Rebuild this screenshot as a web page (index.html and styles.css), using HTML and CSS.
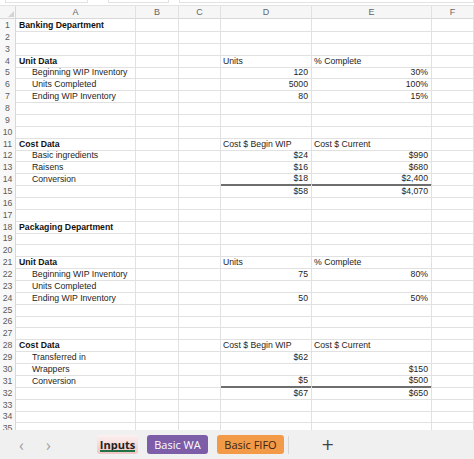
FILE: index.html
```html
<!DOCTYPE html>
<html>
<head>
<meta charset="utf-8">
<link rel="stylesheet" href="styles.css">
</head>
<body>
<div class="app">
  <div class="topstrip">
    <div class="box b1"></div><div class="box b2"></div><div class="box b3"></div>
  </div>
  <div class="sheet">
    <div class="row head"><span class="rh corner"><span class="tri"></span></span><span class="c ch">A</span><span class="c ch">B</span><span class="c ch">C</span><span class="c ch">D</span><span class="c ch">E</span><span class="c ch">F</span></div>
    <div class="row"><span class="rh">1</span><span class="c b">Banking Department</span><span class="c"></span><span class="c"></span><span class="c"></span><span class="c"></span><span class="c"></span></div>
    <div class="row"><span class="rh">2</span><span class="c"></span><span class="c"></span><span class="c"></span><span class="c"></span><span class="c"></span><span class="c"></span></div>
    <div class="row"><span class="rh">3</span><span class="c"></span><span class="c"></span><span class="c"></span><span class="c"></span><span class="c"></span><span class="c"></span></div>
    <div class="row"><span class="rh">4</span><span class="c b">Unit Data</span><span class="c"></span><span class="c"></span><span class="c">Units</span><span class="c">% Complete</span><span class="c"></span></div>
    <div class="row"><span class="rh">5</span><span class="c in">Beginning WIP Inventory</span><span class="c"></span><span class="c"></span><span class="c r">120</span><span class="c r">30%</span><span class="c"></span></div>
    <div class="row"><span class="rh">6</span><span class="c in">Units Completed</span><span class="c"></span><span class="c"></span><span class="c r">5000</span><span class="c r">100%</span><span class="c"></span></div>
    <div class="row"><span class="rh">7</span><span class="c in">Ending WIP Inventory</span><span class="c"></span><span class="c"></span><span class="c r">80</span><span class="c r">15%</span><span class="c"></span></div>
    <div class="row"><span class="rh">8</span><span class="c"></span><span class="c"></span><span class="c"></span><span class="c"></span><span class="c"></span><span class="c"></span></div>
    <div class="row"><span class="rh">9</span><span class="c"></span><span class="c"></span><span class="c"></span><span class="c"></span><span class="c"></span><span class="c"></span></div>
    <div class="row"><span class="rh">10</span><span class="c"></span><span class="c"></span><span class="c"></span><span class="c"></span><span class="c"></span><span class="c"></span></div>
    <div class="row"><span class="rh">11</span><span class="c b">Cost Data</span><span class="c"></span><span class="c"></span><span class="c">Cost $ Begin WIP</span><span class="c">Cost $ Current</span><span class="c"></span></div>
    <div class="row"><span class="rh">12</span><span class="c in">Basic ingredients</span><span class="c"></span><span class="c"></span><span class="c r">$24</span><span class="c r">$990</span><span class="c"></span></div>
    <div class="row"><span class="rh">13</span><span class="c in">Raisens</span><span class="c"></span><span class="c"></span><span class="c r">$16</span><span class="c r">$680</span><span class="c"></span></div>
    <div class="row"><span class="rh">14</span><span class="c in">Conversion</span><span class="c"></span><span class="c"></span><span class="c r dbl">$18</span><span class="c r dbl">$2,400</span><span class="c"></span></div>
    <div class="row"><span class="rh">15</span><span class="c"></span><span class="c"></span><span class="c"></span><span class="c r">$58</span><span class="c r">$4,070</span><span class="c"></span></div>
    <div class="row"><span class="rh">16</span><span class="c"></span><span class="c"></span><span class="c"></span><span class="c"></span><span class="c"></span><span class="c"></span></div>
    <div class="row"><span class="rh">17</span><span class="c"></span><span class="c"></span><span class="c"></span><span class="c"></span><span class="c"></span><span class="c"></span></div>
    <div class="row"><span class="rh">18</span><span class="c b">Packaging Department</span><span class="c"></span><span class="c"></span><span class="c"></span><span class="c"></span><span class="c"></span></div>
    <div class="row"><span class="rh">19</span><span class="c"></span><span class="c"></span><span class="c"></span><span class="c"></span><span class="c"></span><span class="c"></span></div>
    <div class="row"><span class="rh">20</span><span class="c"></span><span class="c"></span><span class="c"></span><span class="c"></span><span class="c"></span><span class="c"></span></div>
    <div class="row"><span class="rh">21</span><span class="c b">Unit Data</span><span class="c"></span><span class="c"></span><span class="c">Units</span><span class="c">% Complete</span><span class="c"></span></div>
    <div class="row"><span class="rh">22</span><span class="c in">Beginning WIP Inventory</span><span class="c"></span><span class="c"></span><span class="c r">75</span><span class="c r">80%</span><span class="c"></span></div>
    <div class="row"><span class="rh">23</span><span class="c in">Units Completed</span><span class="c"></span><span class="c"></span><span class="c"></span><span class="c"></span><span class="c"></span></div>
    <div class="row"><span class="rh">24</span><span class="c in">Ending WIP Inventory</span><span class="c"></span><span class="c"></span><span class="c r">50</span><span class="c r">50%</span><span class="c"></span></div>
    <div class="row"><span class="rh">25</span><span class="c"></span><span class="c"></span><span class="c"></span><span class="c"></span><span class="c"></span><span class="c"></span></div>
    <div class="row"><span class="rh">26</span><span class="c"></span><span class="c"></span><span class="c"></span><span class="c"></span><span class="c"></span><span class="c"></span></div>
    <div class="row"><span class="rh">27</span><span class="c"></span><span class="c"></span><span class="c"></span><span class="c"></span><span class="c"></span><span class="c"></span></div>
    <div class="row"><span class="rh">28</span><span class="c b">Cost Data</span><span class="c"></span><span class="c"></span><span class="c">Cost $ Begin WIP</span><span class="c">Cost $ Current</span><span class="c"></span></div>
    <div class="row"><span class="rh">29</span><span class="c in">Transferred in</span><span class="c"></span><span class="c"></span><span class="c r">$62</span><span class="c"></span><span class="c"></span></div>
    <div class="row"><span class="rh">30</span><span class="c in">Wrappers</span><span class="c"></span><span class="c"></span><span class="c"></span><span class="c r">$150</span><span class="c"></span></div>
    <div class="row"><span class="rh">31</span><span class="c in">Conversion</span><span class="c"></span><span class="c"></span><span class="c r dbl">$5</span><span class="c r dbl">$500</span><span class="c"></span></div>
    <div class="row"><span class="rh">32</span><span class="c"></span><span class="c"></span><span class="c"></span><span class="c r">$67</span><span class="c r">$650</span><span class="c"></span></div>
    <div class="row"><span class="rh">33</span><span class="c"></span><span class="c"></span><span class="c"></span><span class="c"></span><span class="c"></span><span class="c"></span></div>
    <div class="row"><span class="rh">34</span><span class="c"></span><span class="c"></span><span class="c"></span><span class="c"></span><span class="c"></span><span class="c"></span></div>
    <div class="row"><span class="rh">35</span><span class="c"></span><span class="c"></span><span class="c"></span><span class="c"></span><span class="c"></span><span class="c"></span></div>
  </div>
  <div class="tabbar">
    <div class="nav"><span class="arrow">&lsaquo;</span><span class="arrow">&rsaquo;</span></div>
    <div class="tabs">
      <span class="tab t-inputs">Inputs</span>
      <span class="tab t-wa">Basic WA</span>
      <span class="tab t-fifo">Basic FIFO</span>
      <span class="sep"></span>
      <span class="plus">+</span>
    </div>
  </div>
</div>
</body>
</html>
```
FILE: styles.css
```css
html, body {
  margin: 0;
  padding: 0;
  background: #ffffff;
}
.app {
  width: 474px;
  height: 459px;
  overflow: hidden;
  display: flex;
  flex-direction: column;
  font-family: "Liberation Sans", Arial, sans-serif;
  font-size: 8.7px;
  color: #1e1e1e;
}
.topstrip {
  height: 6px;
  flex: none;
  display: flex;
  background: #ffffff;
  border-bottom: 1px solid #e3e3e3;
  box-sizing: border-box;
}
.box {
  height: 3px;
  border: 1px solid #e2e2e2;
  border-top: none;
  box-sizing: border-box;
}
.b1 { width: 84px; margin-left: 5px; }
.b2 { width: 62px; margin-left: 20px; }
.b3 { width: 300px; margin-left: 10px; }
.sheet {
  flex: 1;
  overflow: hidden;
}
.row {
  display: grid;
  grid-template-columns: 16px 120px 43px 42px 91px 120px 42px;
  height: 11.87px;
}
.row.head {
  height: 13px;
  background: #f6f6f6;
}
.c, .rh {
  box-sizing: border-box;
  border-right: 1px solid #e1e1e1;
  border-bottom: 1px solid #e1e1e1;
  white-space: nowrap;
  overflow: visible;
  line-height: 12px;
  padding: 0 2px;
}
.row.head .c, .row.head .rh {
  line-height: 12px;
  border-bottom: 1px solid #d8d8d8;
}
.ch {
  text-align: center;
  color: #666666;
  font-size: 9px;
}
.rh {
  text-align: center;
  color: #5c5c5c;
  padding: 0;
  background: #f8f8f8;
  border-right: 1px solid #d8d8d8;
}
.corner {
  position: relative;
  background: #f6f6f6;
}
.tri {
  position: absolute;
  right: 1px;
  bottom: 1px;
  width: 0;
  height: 0;
  border-left: 6px solid transparent;
  border-bottom: 6px solid #d4d4d4;
}
.b {
  font-weight: bold;
  padding-left: 3px;
  color: #111111;
}
.in {
  padding-left: 16px;
}
.r {
  text-align: right;
  padding-right: 3px;
}
.dbl {
  border-bottom: 2px solid #6e6e6e;
  line-height: 11px;
}
.tabbar {
  height: 29px;
  flex: none;
  background: #f0f0f0;
  display: flex;
  align-items: center;
  font-family: "Open Sans", "Noto Sans", sans-serif;
}
.nav {
  width: 97px;
  display: flex;
  padding-left: 19px;
  box-sizing: border-box;
  gap: 19px;
}
.arrow {
  color: #a0a0a0;
  font-size: 16px;
  line-height: 16px;
  width: 8px;
}
.tabs {
  display: flex;
  align-items: center;
}
.tab {
  height: 19px;
  line-height: 19px;
  font-size: 11px;
  border-radius: 3px;
  box-sizing: border-box;
  margin-right: 9px;
}
.t-inputs {
  width: 41px;
  text-align: center;
  font-weight: bold;
  color: #222222;
  background: linear-gradient(#fcf1f1, #f0c4c4);
  position: relative;
}
.t-inputs::after {
  content: "";
  position: absolute;
  left: 3px;
  right: 3px;
  bottom: 2px;
  height: 2px;
  background: #217346;
}
.t-wa {
  width: 61px;
  text-align: center;
  color: #ffffff;
  background: #7d5ca8;
}
.t-fifo {
  width: 67px;
  text-align: center;
  color: #3b2412;
  background: #f39a48;
  margin-right: 4px;
}
.sep {
  width: 1px;
  height: 18px;
  background: #d6d6d6;
}
.plus {
  margin-left: 32px;
  font-size: 16px;
  color: #444444;
  font-family: "DejaVu Sans", sans-serif;
}
```
